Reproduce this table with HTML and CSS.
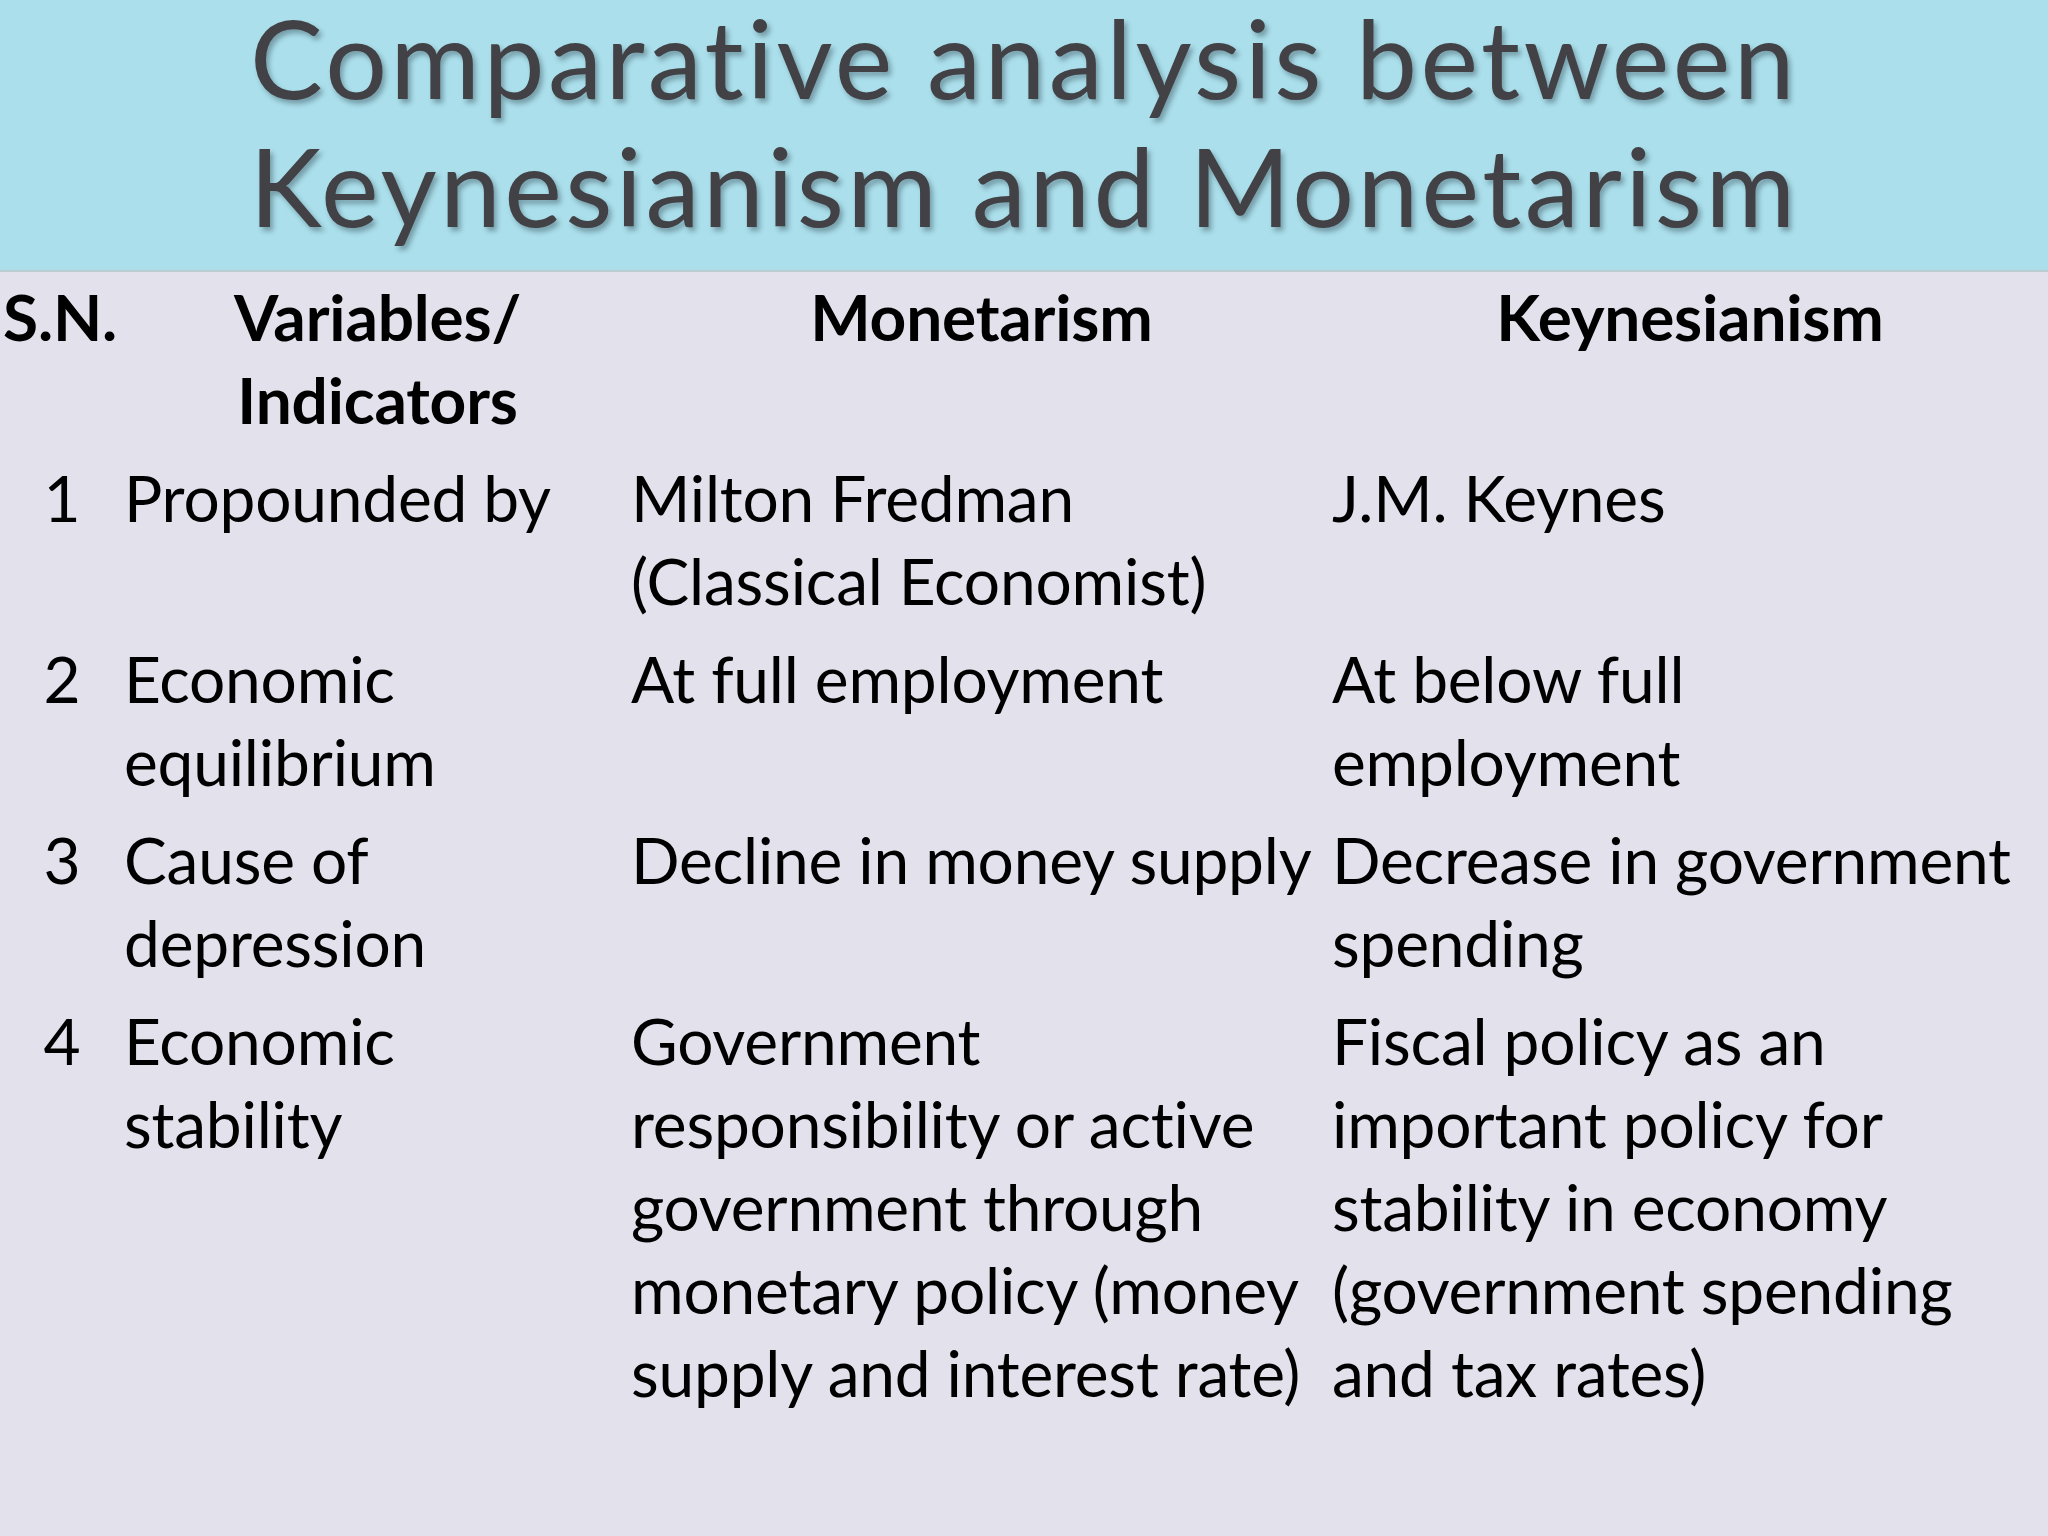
FILE: index.html
```html
<!DOCTYPE html>
<html lang="en">
<head>
<meta charset="utf-8">
<title>Comparative analysis between Keynesianism and Monetarism</title>
<link rel="stylesheet" href="styles.css">
</head>
<body>
<div class="slide">
  <header class="banner">
    <h1 class="title"><span class="tline">Comparative analysis between</span> <span class="tline">Keynesianism and Monetarism</span></h1>
  </header>
  <section class="table">
    <div class="row head">
      <div class="cell sn">S.N.</div>
      <div class="cell var">Variables/<br>Indicators</div>
      <div class="cell mon">Monetarism</div>
      <div class="cell key">Keynesianism</div>
    </div>
    <div class="row">
      <div class="cell num">1</div>
      <div class="cell">Propounded by</div>
      <div class="cell">Milton Fredman<br>(Classical Economist)</div>
      <div class="cell">J.M. Keynes</div>
    </div>
    <div class="row">
      <div class="cell num">2</div>
      <div class="cell">Economic<br>equilibrium</div>
      <div class="cell">At full employment</div>
      <div class="cell">At below full<br>employment</div>
    </div>
    <div class="row">
      <div class="cell num">3</div>
      <div class="cell">Cause of<br>depression</div>
      <div class="cell">Decline in money supply</div>
      <div class="cell">Decrease in government<br>spending</div>
    </div>
    <div class="row">
      <div class="cell num">4</div>
      <div class="cell">Economic<br>stability</div>
      <div class="cell">Government<br>responsibility or active<br>government through<br>monetary policy (money<br>supply and interest rate)</div>
      <div class="cell">Fiscal policy as an<br>important policy for<br>stability in economy<br>(government spending<br>and tax rates)</div>
    </div>
  </section>
</div>
</body>
</html>
```
FILE: styles.css
```css
html, body {
  margin: 0;
  padding: 0;
}
body {
  background: #e3e1ec;
  font-family: Lato, "Open Sans", "Liberation Sans", sans-serif;
  color: #000;
}
.slide {
  width: 2048px;
  height: 1536px;
  overflow: hidden;
  background: #e3e1ec;
}
.banner {
  height: 272px;
  box-sizing: border-box;
  background: #aadfeb;
  border-bottom: 2px solid #b9cdd3;
  display: flex;
  justify-content: center;
}
.title {
  margin: 0;
  padding: 0;
  display: flex;
  flex-direction: column;
  align-items: center;
  gap: 14px;
  font-weight: 400;
  font-size: 109px;
  line-height: 114px;
  color: #414146;
  text-align: center;
  letter-spacing: 3.4px;
  white-space: nowrap;
  text-shadow: 3px 4px 5px rgba(40, 60, 70, 0.4);
}
.tline {
  display: block;
}
.table {
  display: flex;
  flex-direction: column;
  gap: 15px;
  padding-top: 3px;
}
.row {
  display: grid;
  grid-template-columns: 124px 507px 701px 1fr;
  font-size: 64px;
  line-height: 83px;
  letter-spacing: -0.2px;
  white-space: nowrap;
}
.head {
  font-weight: 700;
}
.sn {
  padding-left: 3px;
}
.var, .mon, .key {
  text-align: center;
}
.num {
  text-align: center;
}
```
